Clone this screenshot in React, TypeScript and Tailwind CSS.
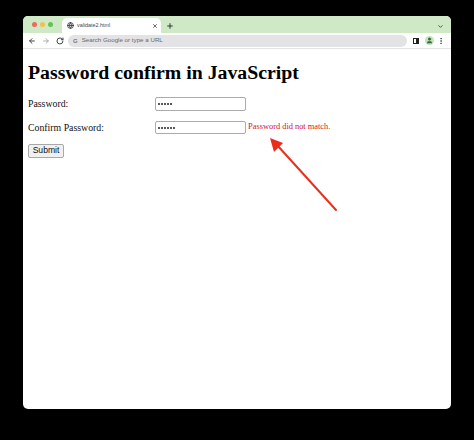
import { ArrowLeft, ArrowRight, RotateCw, X, Plus, ChevronDown, Globe, User, EllipsisVertical } from 'lucide-react';

const sans = { fontFamily: '"Liberation Sans", Arial, sans-serif' };

function PasswordField({ dots }: { dots: number }) {
  return (
    <div className="h-[13.5px] w-[91px] bg-white border border-[#ababab] rounded-[2px] flex items-center pl-[2px] shrink-0">
      <span className="flex gap-[1px]">
        {[...Array(dots)].map((_, i) => (
          <span key={i} className="w-[2px] h-[2px] rounded-full bg-[#222]" />
        ))}
      </span>
    </div>
  );
}

export default function App() {
  return (
    <div className="relative w-[474px] h-[440px] bg-black pt-[16px] pl-[23px] overflow-hidden font-['Liberation_Serif',serif]">
      <div className="relative w-[428px] h-[393px] bg-white rounded-[5px] overflow-hidden">
        {/* Tab strip */}
        <div className="h-[17px] bg-[#cfe8c6] flex items-end pl-[9px] pr-[7px]">
          <div className="flex items-center gap-[3px] h-[17px] w-[30px] shrink-0">
            <span className="w-[5px] h-[5px] rounded-full bg-[#ec6a5e]" />
            <span className="w-[5px] h-[5px] rounded-full bg-[#f4bf4f]" />
            <span className="w-[5px] h-[5px] rounded-full bg-[#61c554]" />
          </div>
          <div className="w-[99px] h-[15px] bg-white rounded-t-[5px] flex items-center pl-[5px] pr-[3px] shrink-0" style={sans}>
            <Globe className="w-[7px] h-[7px] text-[#3c4043]" strokeWidth={3} />
            <span className="ml-[3px] text-[5.4px] leading-none text-[#45494d]">validate2.html</span>
            <X className="ml-auto w-[6px] h-[6px] text-[#3c4043]" strokeWidth={3} />
          </div>
          <Plus className="ml-[5px] mb-[3px] w-[8px] h-[8px] text-[#2f3a2f]" strokeWidth={3} />
          <ChevronDown className="ml-auto mb-[3px] w-[7px] h-[7px] text-[#3d4a3d]" strokeWidth={3} />
        </div>

        {/* Toolbar */}
        <div className="h-[16px] bg-white border-b border-[#e3e3e3] flex items-center pl-[5px] pr-[6px]" style={sans}>
          <ArrowLeft className="w-[8px] h-[8px] text-[#40464a]" strokeWidth={3} />
          <ArrowRight className="ml-[6px] w-[8px] h-[8px] text-[#a9acae]" strokeWidth={3} />
          <RotateCw className="ml-[6px] w-[8px] h-[8px] text-[#40464a]" strokeWidth={3} />
          <div className="ml-[4px] w-[340px] h-[12px] rounded-full bg-[#e3e3e5] flex items-center pl-[5px]">
            <span className="text-[6px] leading-none font-bold text-[#777]">G</span>
            <span className="ml-[4px] text-[6.2px] leading-none text-[#66696d]">Search Google or type a URL</span>
          </div>
          <span className="ml-[6px] w-[6px] h-[6px] border border-[#222] border-r-[3px]" />
          <span className="ml-[6px] w-[9px] h-[9px] rounded-full bg-[#c4e3b8] flex items-center justify-center">
            <User className="w-[7px] h-[7px] text-[#2d6a37]" fill="#2d6a37" strokeWidth={2} />
          </span>
          <EllipsisVertical className="ml-[3px] w-[8px] h-[8px] text-[#565a5e]" strokeWidth={3} />
        </div>

        {/* Page */}
        <div className="pl-[5px] pt-[11px]">
          <h1 className="text-[19.8px] leading-[25px] font-bold text-black whitespace-nowrap">Password confirm in JavaScript</h1>
          <div className="mt-[12px] flex items-center h-[14px]">
            <span className="w-[127px] text-[9.8px] leading-none text-[#111]">Password:</span>
            <PasswordField dots={5} />
          </div>
          <div className="mt-[9.5px] flex items-center h-[14px]">
            <span className="w-[127px] text-[9.8px] leading-none text-[#111]">Confirm Password:</span>
            <PasswordField dots={6} />
            <span className="ml-[2px] text-[8.4px] leading-none text-[#d0142c] whitespace-nowrap">Password did not match.</span>
          </div>
          <button
            className="mt-[9px] block w-[36px] h-[14px] bg-[#f0f0f0] border border-[#a8a8a8] rounded-[2px] text-[8.6px] leading-none text-[#111] text-center"
            style={sans}
          >
            Submit
          </button>
        </div>

        {/* Annotation arrow */}
        <svg className="absolute left-[240px] top-[117px]" width="80" height="84" viewBox="0 0 80 84">
          <line x1="73" y1="77" x2="14" y2="12" stroke="#e8301c" strokeWidth="2" strokeLinecap="round" />
          <polygon points="7,5 20,10 11,19" fill="#ee2a1a" />
        </svg>
      </div>
    </div>
  );
}
